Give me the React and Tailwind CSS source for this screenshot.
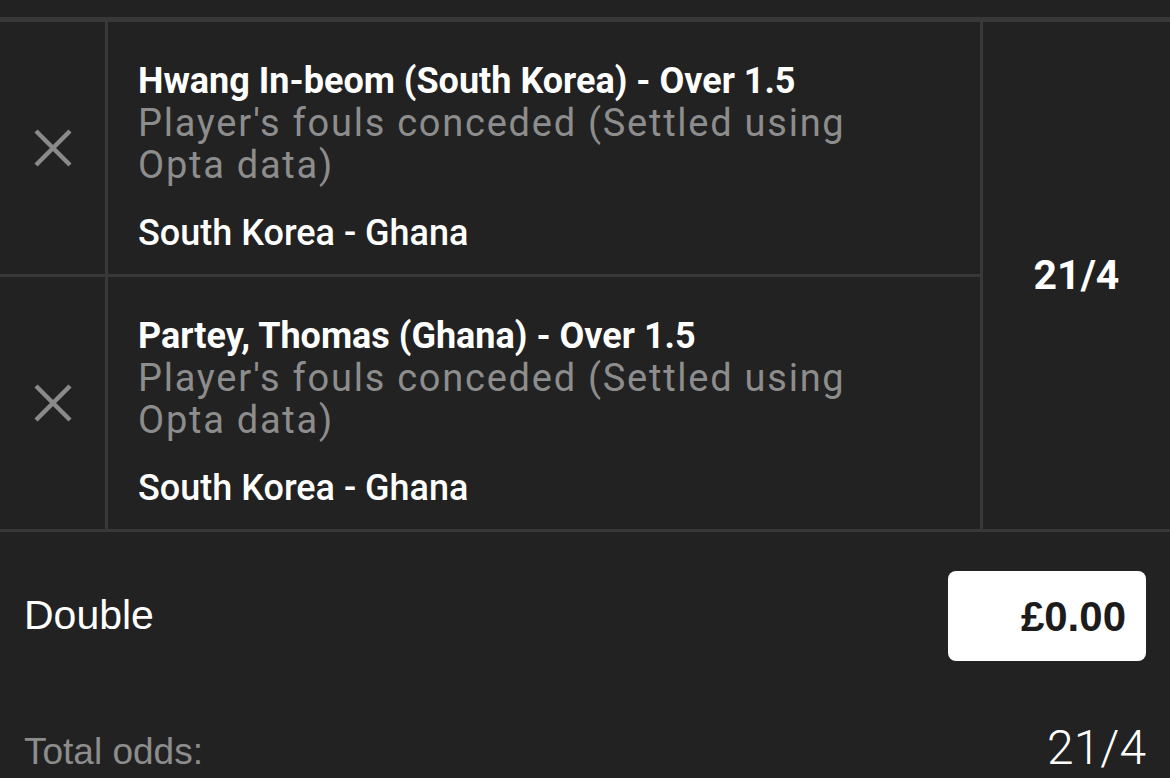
import React from 'react';

const legs = [
  { title: 'Hwang In-beom (South Korea) - Over 1.5', match: 'South Korea - Ghana' },
  { title: 'Partey, Thomas (Ghana) - Over 1.5', match: 'South Korea - Ghana' },
];

function CloseIcon() {
  return (
    <svg width="40" height="40" viewBox="0 0 40 40" className="text-[#8a8a8a]">
      <path d="M3 3 L37 37 M37 3 L3 37" stroke="currentColor" strokeWidth="4.5" fill="none" />
    </svg>
  );
}

function Leg({ leg, first }) {
  return (
    <div className={`flex ${first ? '' : 'border-t-[3px] border-[#383838]'}`}>
      <div className="w-[108px] shrink-0 border-r-[3px] border-[#383838] flex items-center justify-center">
        <CloseIcon />
      </div>
      <div className="flex-1 pl-[30px] pr-[92px] pt-[38px] pb-[20px] font-['Roboto',sans-serif] leading-[42px]">
        <div className="text-white font-bold text-[36px]">{leg.title}</div>
        <div className="text-[#8d8d8d] text-[38px] tracking-[1.75px]">
          Player's fouls conceded (Settled using Opta data)
        </div>
        <div className="text-white font-medium mt-[26px] text-[36px]">{leg.match}</div>
      </div>
    </div>
  );
}

export default function App() {
  return (
    <div className="bg-[#222222] w-[1170px] h-[778px] overflow-hidden pt-[17px]">
      <div className="flex border-t-[5px] border-b-[3px] border-[#383838]">
        <div className="flex-1 border-r-[3px] border-[#383838]">
          {legs.map((leg, i) => (
            <Leg key={i} leg={leg} first={i === 0} />
          ))}
        </div>
        <div className="w-[187px] flex items-center justify-center font-['Roboto',sans-serif] font-bold text-[41px] text-white">
          21/4
        </div>
      </div>

      <div className="px-[24px] font-['Liberation_Sans',Arial,sans-serif]">
        <div className="flex items-center justify-between mt-[39px]">
          <span className="text-white text-[41px]">Double</span>
          <div className="w-[198px] h-[90px] bg-white rounded-[8px] flex items-center justify-end pr-[20px]">
            <span className="text-[#1c1c1c] font-bold text-[42px]">£0.00</span>
          </div>
        </div>
        <div className="flex items-baseline justify-between mt-[63px] leading-none">
          <span className="text-[#8d8d8d] text-[37px]">Total odds:</span>
          <span className="text-white text-[48px] font-['Roboto',sans-serif] font-light">21/4</span>
        </div>
      </div>
    </div>
  );
}
